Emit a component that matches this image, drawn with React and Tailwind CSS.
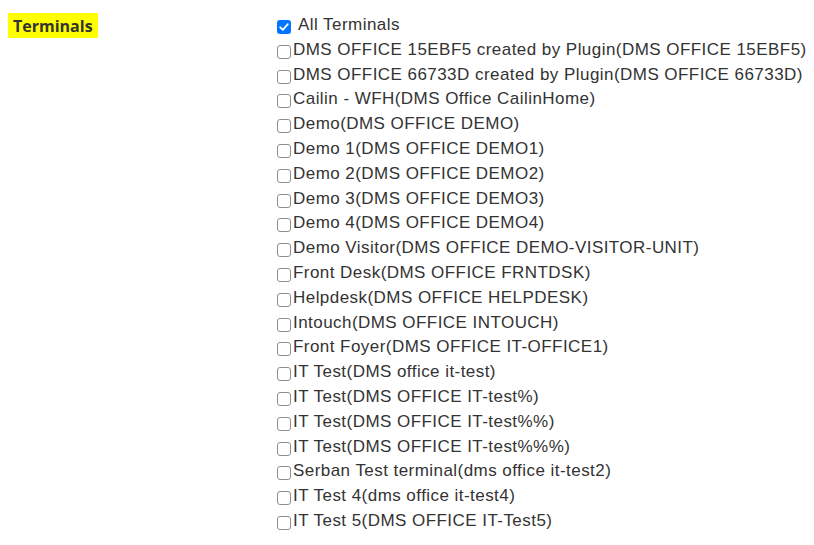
const terminals = [
  'DMS OFFICE 15EBF5 created by Plugin(DMS OFFICE 15EBF5)',
  'DMS OFFICE 66733D created by Plugin(DMS OFFICE 66733D)',
  'Cailin - WFH(DMS Office CailinHome)',
  'Demo(DMS OFFICE DEMO)',
  'Demo 1(DMS OFFICE DEMO1)',
  'Demo 2(DMS OFFICE DEMO2)',
  'Demo 3(DMS OFFICE DEMO3)',
  'Demo 4(DMS OFFICE DEMO4)',
  'Demo Visitor(DMS OFFICE DEMO-VISITOR-UNIT)',
  'Front Desk(DMS OFFICE FRNTDSK)',
  'Helpdesk(DMS OFFICE HELPDESK)',
  'Intouch(DMS OFFICE INTOUCH)',
  'Front Foyer(DMS OFFICE IT-OFFICE1)',
  'IT Test(DMS office it-test)',
  'IT Test(DMS OFFICE IT-test%)',
  'IT Test(DMS OFFICE IT-test%%)',
  'IT Test(DMS OFFICE IT-test%%%)',
  'Serban Test terminal(dms office it-test2)',
  'IT Test 4(dms office it-test4)',
  'IT Test 5(DMS OFFICE IT-Test5)',
]

function Box({ checked }) {
  if (checked) {
    return (
      <span className="w-[14px] h-[14px] mt-[5px] shrink-0 rounded-[3px] bg-[#0075ff] flex items-center justify-center">
        <svg viewBox="0 0 14 14" className="w-[14px] h-[14px]">
          <path d="M3.2 7.3 L5.8 9.8 L10.8 4.2" fill="none" stroke="#fff" strokeWidth="1.8" strokeLinecap="round" strokeLinejoin="round" />
        </svg>
      </span>
    )
  }
  return <span className="w-[14px] h-[14px] mt-[5px] shrink-0 rounded-[3px] border-[1.5px] border-[#8f8f8f] bg-white" />
}

export default function App() {
  return (
    <div className="w-[814px] h-[545px] bg-white flex pt-[13px] font-['Liberation_Sans',Arial,sans-serif] text-[#333]">
      {/* label column */}
      <div className="w-[277px] pl-[8px]">
        <span className="inline-block bg-[#ffff00] px-[5px] h-[25px] leading-[26px] font-['Open_Sans',sans-serif] font-bold text-[16px] text-[#333]">
          Terminals
        </span>
      </div>
      <div className="flex flex-col pt-[2px] text-[17px] tracking-[0.45px] leading-[20px]">
        <label className="h-[24.8px] flex items-start">
          <Box checked />
          <span className="ml-[7px]">All Terminals</span>
        </label>
        {terminals.map((t) => (
          <label key={t} className="h-[24.8px] flex items-start">
            <Box />
            <span className="ml-[2px]">{t}</span>
          </label>
        ))}
      </div>
    </div>
  )
}
